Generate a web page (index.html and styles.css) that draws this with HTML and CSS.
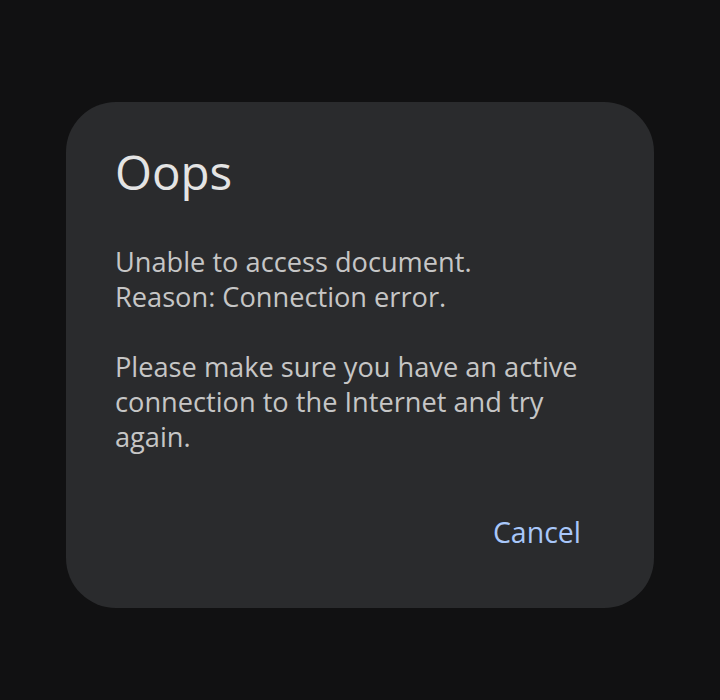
FILE: index.html
```html
<!DOCTYPE html>
<html>
<head>
<meta charset="utf-8">
<link rel="stylesheet" href="styles.css">
</head>
<body>
<div class="dialog">
  <h1 class="title">Oops</h1>
  <div class="message">
    <p>Unable to access document.<br>Reason: Connection error.</p>
    <p>Please make sure you have an active connection to the Internet and try again.</p>
  </div>
  <div class="actions">
    <button class="btn">Cancel</button>
  </div>
</div>
</body>
</html>
```
FILE: styles.css
```css
html, body {
  margin: 0;
  padding: 0;
  background: #111112;
  width: 720px;
  height: 700px;
  overflow: hidden;
}
body {
  font-family: "Open Sans", Roboto, sans-serif;
}
.dialog {
  box-sizing: border-box;
  margin: 102px 0 0 66px;
  width: 588px;
  height: 506px;
  background: #2a2b2d;
  border-radius: 50px;
  padding: 40px 49px 0 49px;
  display: flex;
  flex-direction: column;
}
.title {
  margin: 0;
  font-weight: 400;
  font-size: 47.5px;
  line-height: 60px;
  color: #e4e4e4;
}
.message {
  margin-top: 42px;
  font-size: 27.2px;
  line-height: 35px;
  color: #c6c6c6;
}
.message p {
  margin: 0 0 35px 0;
}
.message p:last-child { margin-bottom: 0; }
.actions {
  display: flex;
  justify-content: flex-end;
  margin-top: 51px;
}
.btn {
  background: none;
  border: none;
  font-family: "Open Sans", Roboto, sans-serif;
  font-size: 28.5px;
  font-weight: 500;
  color: #a8c7fa;
  padding: 12px 24px;
  line-height: 30px;
}
```
